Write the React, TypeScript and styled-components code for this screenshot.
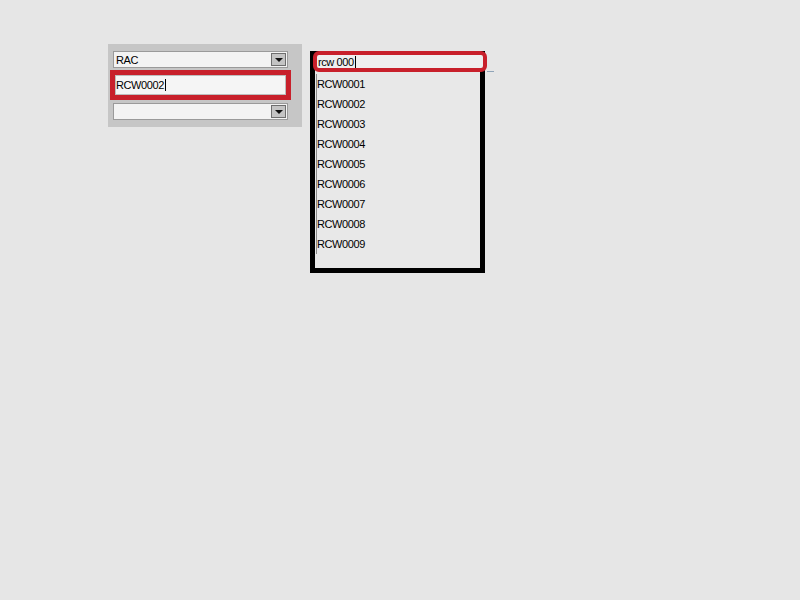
import styled, { createGlobalStyle } from "styled-components";

const GlobalStyle = createGlobalStyle`
  html, body {
    margin: 0;
    padding: 0;
    background: #e6e6e6;
    font-family: "Liberation Sans", Arial, sans-serif;
  }
`;

const codes = [
  "RCW0001",
  "RCW0002",
  "RCW0003",
  "RCW0004",
  "RCW0005",
  "RCW0006",
  "RCW0007",
  "RCW0008",
  "RCW0009",
];

export default function App() {
  return (
    <>
      <GlobalStyle />
      <Page>
        <FormPanel>
          <Combo>
            <ComboText>RAC</ComboText>
            <DropButton>
              <Arrow />
            </DropButton>
          </Combo>
          <Highlight>
            <TextField>
              RCW0002<Caret />
            </TextField>
          </Highlight>
          <Combo>
            <ComboText />
            <DropButton>
              <Arrow />
            </DropButton>
          </Combo>
        </FormPanel>

        <Popup>
          <SearchBox>
            rcw 000<Caret />
          </SearchBox>
          <Tick />
          <List>
            {codes.map((c) => (
              <Item key={c}>{c}</Item>
            ))}
          </List>
        </Popup>
      </Page>
    </>
  );
}

const Page = styled.div`
  display: flex;
  align-items: flex-start;
  gap: 8px;
  padding: 44px 0 0 108px;
  width: 800px;
  height: 600px;
  box-sizing: border-box;
`;

const FormPanel = styled.div`
  display: flex;
  flex-direction: column;
  width: 194px;
  height: 83px;
  box-sizing: border-box;
  padding: 7px 0 0 5px;
  background: #c6c6c6;
`;

const Combo = styled.div`
  display: flex;
  align-items: center;
  width: 175px;
  height: 17px;
  box-sizing: border-box;
  border: 1px solid #9a9a9a;
  background: #f3f3f3;
  padding: 0 1px 0 2px;
`;

const ComboText = styled.span`
  flex: 1;
  font-size: 11px;
  letter-spacing: -0.4px;
  color: #000;
`;

const DropButton = styled.div`
  display: flex;
  align-items: center;
  justify-content: center;
  width: 15px;
  height: 13px;
  box-sizing: border-box;
  border: 1px solid #6e6e6e;
  background: #c4c4c4;
`;

const Arrow = styled.div`
  width: 0;
  height: 0;
  border-left: 4px solid transparent;
  border-right: 4px solid transparent;
  border-top: 4px solid #111;
`;

const Highlight = styled.div`
  width: 181px;
  height: 30px;
  box-sizing: border-box;
  margin: 2px 0 3px -3px;
  border: 5px solid #c8202b;
  background: #f5f5f5;
`;

const TextField = styled.div`
  display: flex;
  align-items: center;
  height: 100%;
  padding-left: 0;
  border: 1px solid #bdbdbd;
  box-sizing: border-box;
  font-size: 11px;
  letter-spacing: -0.4px;
  color: #000;
`;

const Caret = styled.span`
  display: inline-block;
  width: 1px;
  height: 12px;
  background: #000;
  margin-left: 1px;
`;

const Popup = styled.div`
  position: relative;
  display: flex;
  flex-direction: column;
  margin-top: 7px;
  width: 175px;
  height: 222px;
  box-sizing: border-box;
  border: 5px solid #000;
  background: #e8e8e8;
`;

const SearchBox = styled.div`
  display: flex;
  align-items: center;
  height: 21px;
  box-sizing: border-box;
  margin: -5px -7px 0 -2px;
  padding: 1px 0 0 1px;
  border: 4px solid #c8202b;
  border-radius: 6px;
  background: #efefef;
  font-size: 11px;
  letter-spacing: -0.4px;
  color: #000;
`;

const Tick = styled.div`
  position: absolute;
  top: 15px;
  right: -14px;
  width: 7px;
  height: 1px;
  background: #8fa4b8;
`;

const List = styled.div`
  display: flex;
  flex-direction: column;
  margin: 2px 0 0 1px;
  padding-left: 0;
  border-left: 1px solid #8a8a8a;
`;

const Item = styled.div`
  height: 20px;
  line-height: 20px;
  font-size: 11px;
  letter-spacing: -0.4px;
  color: #000;
`;
